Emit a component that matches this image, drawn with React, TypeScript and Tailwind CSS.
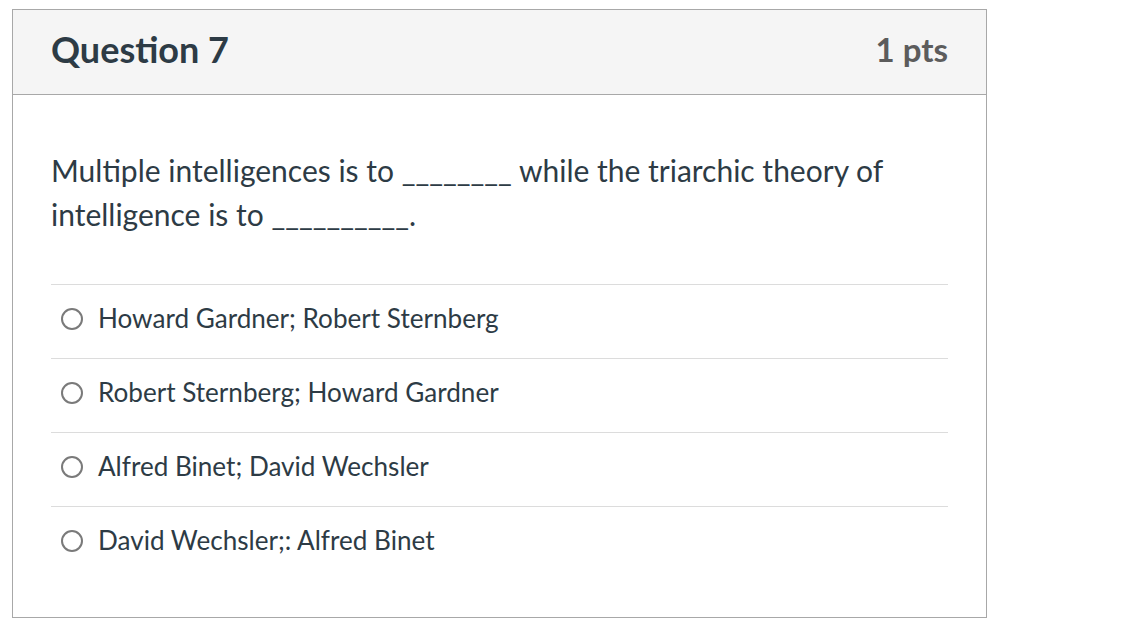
import { FC } from "react";

const options = [
  "Howard Gardner; Robert Sternberg",
  "Robert Sternberg; Howard Gardner",
  "Alfred Binet; David Wechsler",
  "David Wechsler;: Alfred Binet",
];

const blank = (n: number) => "_".repeat(n);

const Radio: FC = () => (
  <span className="block w-[22px] h-[22px] shrink-0 rounded-full border-2 border-[#7a7a7a] bg-white" />
);

const App: FC = () => {
  return (
    <div
      className="min-h-[627px] bg-white pt-[9px] pl-[12px] text-[#2d3b45]"
      style={{ fontFamily: "Lato, 'Open Sans', sans-serif" }}
    >
      <div className="w-[975px] border border-[#a8a8a8]">
        <div className="flex h-[85px] items-center justify-between border-b border-[#a8a8a8] bg-[#f5f5f5] px-[38px] pb-[6px]">
          <h2 className="text-[36px] font-bold leading-none">Question 7</h2>
          <span className="text-[33px] font-bold leading-none text-[#5c5c5c]">1 pts</span>
        </div>
        <div className="px-[38px] pt-[53px] pb-[37px]">
          <p className="text-[30px] leading-[44px]">
            Multiple intelligences is to {blank(8)} while the triarchic theory of intelligence is
            to {blank(10)}.
          </p>
          <div className="mt-[48px]">
            {options.map((opt) => (
              <label
                key={opt}
                className="flex h-[74px] items-center gap-[15px] border-t border-[#dcdcdc] pl-[10px] pb-[6px]"
              >
                <Radio />
                <span className="text-[26.1px]">{opt}</span>
              </label>
            ))}
          </div>
        </div>
      </div>
    </div>
  );
};

export default App;
